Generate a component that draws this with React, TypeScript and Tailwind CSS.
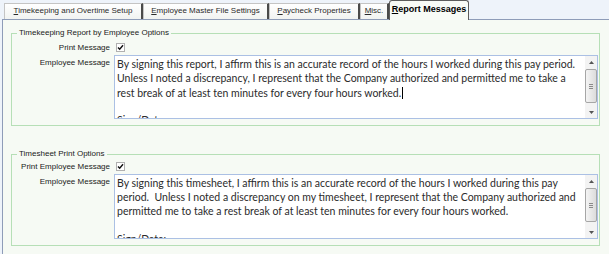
import React from "react";

const lines1 = [
  "By signing this report, I affirm this is an accurate record of the hours I worked during this pay period.",
  "Unless I noted a discrepancy, I represent that the Company authorized and permitted me to take a",
  "rest break of at least ten minutes for every four hours worked.",
  "",
  "Sign/Date:",
];

const lines2 = [
  "By signing this timesheet, I affirm this is an accurate record of the hours I worked during this pay",
  "period.  Unless I noted a discrepancy on my timesheet, I represent that the Company authorized and",
  "permitted me to take a rest break of at least ten minutes for every four hours worked.",
  "",
  "Sign/Date:",
];

function Tab({ w, children, selected }: { w: string; children: React.ReactNode; selected?: boolean }) {
  if (selected) {
    return (
      <div
        className={`${w} relative z-10 -mb-[1px] flex h-[20px] items-center justify-center rounded-t-[3px] border-x border-t border-[#5c5c5c] bg-[#f8fbf6] pb-[2px] text-[9px] font-bold text-black`}
      >
        {children}
      </div>
    );
  }
  return (
    <div
      className={`${w} flex h-[16px] items-center justify-center border-l border-t border-r-2 border-l-[#c4c4c4] border-t-[#c4c4c4] border-r-[#4a4a4a] bg-gradient-to-b from-white to-[#f1f3f1] pb-[1px] text-[8px] text-[#2a2a2a]`}
    >
      {children}
    </div>
  );
}

function Checkbox() {
  return (
    <span className="ml-[2px] flex h-[9px] w-[9px] items-center justify-center border border-[#b0b0b0] bg-white">
      <svg width="7" height="7" viewBox="0 0 7 7">
        <path d="M1 3.4 L2.7 5.2 L6 1.2" stroke="#111" strokeWidth="1.4" fill="none" />
      </svg>
    </span>
  );
}

function Scrollbar() {
  return (
    <div className="flex w-[12px] flex-col bg-[#f3f3f3]">
      <div className="flex h-[12px] items-center justify-center">
        <svg width="5" height="3" viewBox="0 0 5 3">
          <path d="M0 3 L2.5 0 L5 3 Z" fill="#555" />
        </svg>
      </div>
      <div className="mt-[1px] flex h-[34px] flex-col items-center justify-center gap-[1px] rounded-[2px] border border-[#a6a6a6] bg-gradient-to-r from-[#f4f4f4] to-[#dcdcdc]">
        <span className="h-[1px] w-[4px] bg-[#8a8a8a]" />
        <span className="h-[1px] w-[4px] bg-[#8a8a8a]" />
        <span className="h-[1px] w-[4px] bg-[#8a8a8a]" />
      </div>
      <div className="flex-1" />
      <div className="flex h-[12px] items-center justify-center">
        <svg width="5" height="3" viewBox="0 0 5 3">
          <path d="M0 0 L2.5 3 L5 0 Z" fill="#555" />
        </svg>
      </div>
    </div>
  );
}

function Memo({ lines, cursor, h }: { lines: string[]; cursor?: boolean; h: string }) {
  return (
    <div className={`flex ${h} w-[484px] border border-[#abc0e4] bg-white`}>
      <div className="flex-1 overflow-hidden pl-[2px] pt-[1px] font-['Lato',sans-serif] text-[10.5px] leading-[14px] text-[#2b2b2b]">
        {lines.map((l, i) => (
          <div key={i} className="h-[14px] whitespace-pre">
            {l}
            {cursor && i === 2 ? <span className="ml-[1px] inline-block h-[12px] w-[1px] translate-y-[2px] bg-black" /> : null}
          </div>
        ))}
      </div>
      <Scrollbar />
    </div>
  );
}

function Group({
  title,
  checkLabel,
  lines,
  cursor,
  mt,
  pt,
  h,
  memoH,
}: {
  title: string;
  checkLabel: string;
  lines: string[];
  cursor?: boolean;
  mt: string;
  pt: string;
  h: string;
  memoH: string;
}) {
  return (
    <div className={`relative ${mt} ml-[8px] ${h} w-[589px] border border-[#b6dfb6] ${pt}`}>
      <span className="absolute -top-[6px] left-[5px] bg-[#f6faf4] px-[2px] text-[8px] leading-[10px] text-[#1a1a1a]">
        {title}
      </span>
      <div className="flex items-center">
        <div className="w-[98px] text-right text-[8px] leading-[9px] text-[#1a1a1a]">{checkLabel}</div>
        <div className="ml-[4px]">
          <Checkbox />
        </div>
      </div>
      <div className="mt-[3px] flex">
        <div className="w-[98px] pt-[3px] text-right text-[8px] leading-[10px] text-[#1a1a1a]">Employee Message</div>
        <div className="ml-[4px]">
          <Memo lines={lines} cursor={cursor} h={memoH} />
        </div>
      </div>
    </div>
  );
}

export default function App() {
  return (
    <div className="flex h-[254px] w-[609px] flex-col overflow-hidden bg-[#eef3fa] font-['Liberation_Sans',Arial,sans-serif]">
      <div className="flex h-[19px] items-end pl-[4px]">
        <Tab w="w-[139px]">
          <span>
            <u>T</u>imekeeping and Overtime Setup
          </span>
        </Tab>
        <Tab w="w-[126px]">
          <span>
            <u>E</u>mployee Master File Settings
          </span>
        </Tab>
        <Tab w="w-[91px]">
          <span>
            <u>P</u>aycheck Properties
          </span>
        </Tab>
        <Tab w="w-[29px]">
          <span>
            <u>M</u>isc.
          </span>
        </Tab>
        <Tab w="w-[80px]" selected>
          <span>
            <u>R</u>eport Messages
          </span>
        </Tab>
      </div>
      <div className="ml-[2px] flex-1 border-l border-t border-[#8e9cb8] bg-[#f6faf4]">
        <Group
          title="Timekeeping Report by Employee Options"
          checkLabel="Print Message"
          lines={lines1}
          cursor
          mt="mt-[13px]"
          pt="pt-[9px]"
          h="h-[93px]"
          memoH="h-[64px]"
        />
        <Group
          title="Timesheet Print Options"
          checkLabel="Print Employee Message"
          lines={lines2}
          mt="mt-[28px]"
          pt="pt-[7px]"
          h="h-[92px]"
          memoH="h-[65px]"
        />
      </div>
    </div>
  );
}
